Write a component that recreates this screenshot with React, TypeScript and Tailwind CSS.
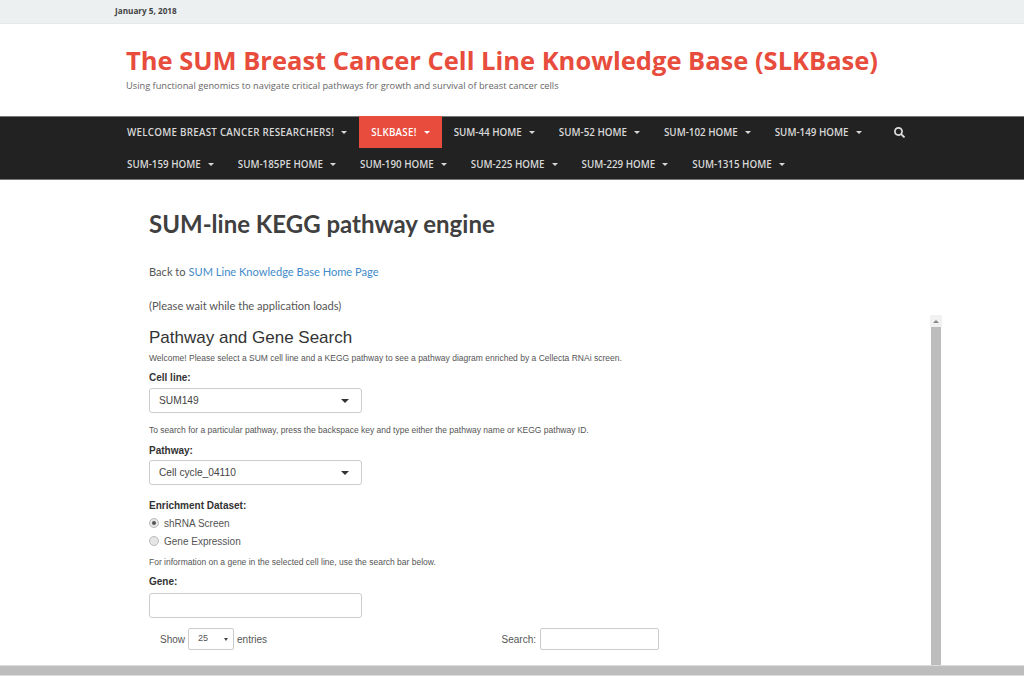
import { FaSearch } from 'react-icons/fa';

const navRows = [
  ['WELCOME BREAST CANCER RESEARCHERS!', 'SLKBASE!', 'SUM-44 HOME', 'SUM-52 HOME', 'SUM-102 HOME', 'SUM-149 HOME'],
  ['SUM-159 HOME', 'SUM-185PE HOME', 'SUM-190 HOME', 'SUM-225 HOME', 'SUM-229 HOME', 'SUM-1315 HOME'],
];

function NavItem({ label }: { label: string }) {
  const active = label === 'SLKBASE!';
  const wide = label.startsWith('WELCOME') || active;
  return (
    <a className={active ? 'flex h-8 items-center bg-[#e74c3c] px-3 text-white' : 'flex h-8 items-center px-3 text-[#d8d8d8]'}>
      <span className={wide ? 'pt-[2px] tracking-[0.25px]' : 'pt-[2px]'}>{label}</span>
      <span className="ml-[7px] mt-px h-0 w-0 border-x-[3px] border-t-[3px] border-x-transparent border-t-current" />
    </a>
  );
}

function Caret() {
  return <span className="h-0 w-0 border-x-[4px] border-t-[4px] border-x-transparent border-t-[#333]" />;
}

function SelectBox({ value }: { value: string }) {
  return (
    <div className="flex h-[25px] w-[213px] items-center justify-between rounded-[3px] border border-[#ccc] bg-white pl-[9px] pr-[12px] text-[10.2px] text-[#444]">
      {value}
      <Caret />
    </div>
  );
}

function Radio({ label, checked }: { label: string; checked?: boolean }) {
  return (
    <div className="flex h-[18px] items-center gap-[5px] text-[10px] text-[#555]">
      <span className="flex h-[10px] w-[10px] items-center justify-center rounded-full border border-[#bbb] bg-[#e6e6e6]">
        {checked && <span className="h-[4px] w-[4px] rounded-full bg-[#555]" />}
      </span>
      {label}
    </div>
  );
}

export default function App() {
  return (
    <div className="flex h-[676px] w-[1024px] flex-col overflow-hidden bg-white font-['Lato',sans-serif] text-[#444]">
      <div className="flex h-6 shrink-0 items-center border-b border-[#e6e9ea] bg-[#ecf0f1] pl-[115px] font-['Open_Sans',sans-serif] text-[8.2px] font-bold text-[#444]">
        January 5, 2018
      </div>

      <header className="h-[92px] shrink-0 pl-[126px] pt-[20px] font-['Open_Sans',sans-serif]">
        <h1 className="text-[25.5px] font-bold leading-[33px] text-[#e74c3c]">The SUM Breast Cancer Cell Line Knowledge Base (SLKBase)</h1>
        <p className="mt-[2px] text-[9.25px] leading-[14px] text-[#666]">Using functional genomics to navigate critical pathways for growth and survival of breast cancer cells</p>
      </header>

      <nav className="h-16 shrink-0 bg-[#222] pl-[115px] font-['Open_Sans',sans-serif] text-[9.8px] font-semibold shadow-[inset_0_1px_0_#777,inset_0_-1px_0_#777]">
        {navRows.map((row, i) => (
          <div key={i} className="flex h-8 items-center">
            {row.map((label) => (
              <NavItem key={label} label={label} />
            ))}
            {i === 0 && <FaSearch className="ml-[20px] text-[11px] text-[#ddd]" />}
          </div>
        ))}
      </nav>

      <main className="flex min-h-0 flex-1 flex-col pl-[149px] pr-[82px]">
        <h2 className="mt-[29px] text-[24px] font-bold leading-[30px] text-[#404040]">SUM-line KEGG pathway engine</h2>
        <p className="mt-[25px] text-[11.1px] leading-[16px] text-[#555]">
          Back to <a className="text-[#428bca]">SUM Line Knowledge Base Home Page</a>
        </p>
        <p className="mt-[18px] text-[11.1px] leading-[16px] text-[#555]">(Please wait while the application loads)</p>

        <div className="mt-px flex min-h-0 flex-1 font-['Liberation_Sans',sans-serif]">
          <div className="min-w-0 flex-1">
            <h3 className="mt-[13px] text-[17px] leading-[20px] text-[#333]">Pathway and Gene Search</h3>
            <p className="mt-[4px] text-[8.5px] leading-[12px] text-[#555]">
              Welcome! Please select a SUM cell line and a KEGG pathway to see a pathway diagram enriched by a Cellecta RNAi screen.
            </p>
            <p className="mt-[8px] text-[10px] font-bold leading-[12px] text-[#333]">Cell line:</p>
            <div className="mt-[4px]">
              <SelectBox value="SUM149" />
            </div>
            <p className="mt-[11px] text-[8.5px] leading-[12px] text-[#555]">To search for a particular pathway, press the backspace key and type either the pathway name or KEGG pathway ID.</p>
            <p className="mt-[9px] text-[10px] font-bold leading-[12px] text-[#333]">Pathway:</p>
            <div className="mt-[3px]">
              <SelectBox value="Cell cycle_04110" />
            </div>
            <p className="mt-[15px] text-[10px] font-bold leading-[12px] text-[#333]">Enrichment Dataset:</p>
            <div className="mt-[2px]">
              <Radio label="shRNA Screen" checked />
              <Radio label="Gene Expression" />
            </div>
            <p className="mt-[6px] text-[8.5px] leading-[12px] text-[#555]">For information on a gene in the selected cell line, use the search bar below.</p>
            <p className="mt-[8px] text-[10px] font-bold leading-[12px] text-[#333]">Gene:</p>
            <div className="mt-[5px] h-[25px] w-[213px] rounded-[3px] border border-[#ccc] bg-white" />
            <div className="mt-[10px] flex w-[510px] items-center justify-between pl-[11px] text-[10px] text-[#555]">
              <div className="flex items-center gap-[3px]">
                Show
                <div className="flex h-[22px] w-[46px] items-center justify-between rounded-[2px] border border-[#ccc] pl-[9px] pr-[5px] text-[9px]">
                  25
                  <span className="h-0 w-0 border-x-[2.5px] border-t-[3px] border-x-transparent border-t-[#444]" />
                </div>
                entries
              </div>
              <div className="flex items-center gap-[4px]">
                Search:
                <div className="h-[22px] w-[119px] rounded-[2px] border border-[#ccc]" />
              </div>
            </div>
          </div>
          <div className="flex w-[12px] shrink-0 flex-col">
            <div className="flex h-[12px] items-center justify-center bg-[#f1f1f1]">
              <span className="h-0 w-0 border-x-[3px] border-b-[3px] border-x-transparent border-b-[#888]" />
            </div>
            <div className="mx-px flex-1 bg-[#bdbdbd]" />
          </div>
        </div>
      </main>

      <div className="h-[11px] shrink-0 border-y border-[#ddd] bg-[#bdbdbd]" />
    </div>
  );
}
